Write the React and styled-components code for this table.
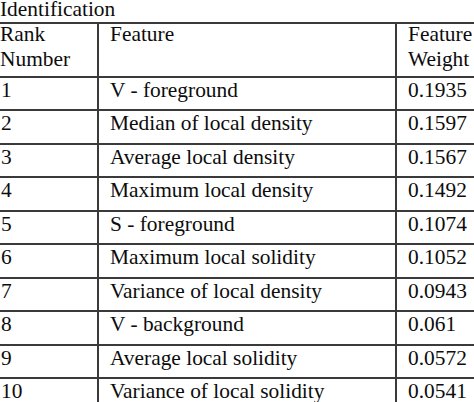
import styled, { createGlobalStyle } from "styled-components";

const GlobalStyle = createGlobalStyle`
  html, body {
    margin: 0;
    padding: 0;
    background: #ffffff;
    overflow: hidden;
  }
  body {
    font-family: "Liberation Serif", "Times New Roman", serif;
    font-size: 21.4px;
    color: #0c0c0c;
  }
`;

const Page = styled.div`
  width: 474px;
  height: 402px;
  overflow: hidden;
`;

const Caption = styled.div`
  height: 22px;
  line-height: 18px;
  white-space: nowrap;
`;

const Table = styled.div`
  width: 474px;
  border-top: 2px solid #3a3a3a;
`;

const Row = styled.div`
  display: grid;
  grid-template-columns: 97px 298px 1fr;
  height: ${(p) => (p.$head ? "53.5px" : "33.5px")};
  box-sizing: border-box;
  border-bottom: 2px solid #3a3a3a;
`;

const Cell = styled.div`
  box-sizing: border-box;
  padding-left: ${(p) => p.$pad}px;
  margin-top: ${(p) => (p.$head ? "-2px" : "0")};
  line-height: 25px;
  white-space: nowrap;
  overflow: hidden;
  border-left: ${(p) => (p.$first ? "none" : "2px solid #3a3a3a")};
`;

const rows = [
  ["1", "V - foreground", "0.1935"],
  ["2", "Median of local density", "0.1597"],
  ["3", "Average local density", "0.1567"],
  ["4", "Maximum local density", "0.1492"],
  ["5", "S - foreground", "0.1074"],
  ["6", "Maximum local solidity", "0.1052"],
  ["7", "Variance of local density", "0.0943"],
  ["8", "V - background", "0.061"],
  ["9", "Average local solidity", "0.0572"],
  ["10", "Variance of local solidity", "0.0541"],
];

export default function App() {
  return (
    <Page>
      <GlobalStyle />
      <Caption>Identification</Caption>
      <Table>
        <Row $head>
          <Cell $first $head $pad={0}>
            Rank
            <br />
            Number
          </Cell>
          <Cell $head $pad={11}>Feature</Cell>
          <Cell $head $pad={11}>
            Feature
            <br />
            Weight
          </Cell>
        </Row>
        {rows.map(([rank, feature, weight]) => (
          <Row key={rank}>
            <Cell $first $pad={1}>{rank}</Cell>
            <Cell $pad={11}>{feature}</Cell>
            <Cell $pad={11}>{weight}</Cell>
          </Row>
        ))}
      </Table>
    </Page>
  );
}
